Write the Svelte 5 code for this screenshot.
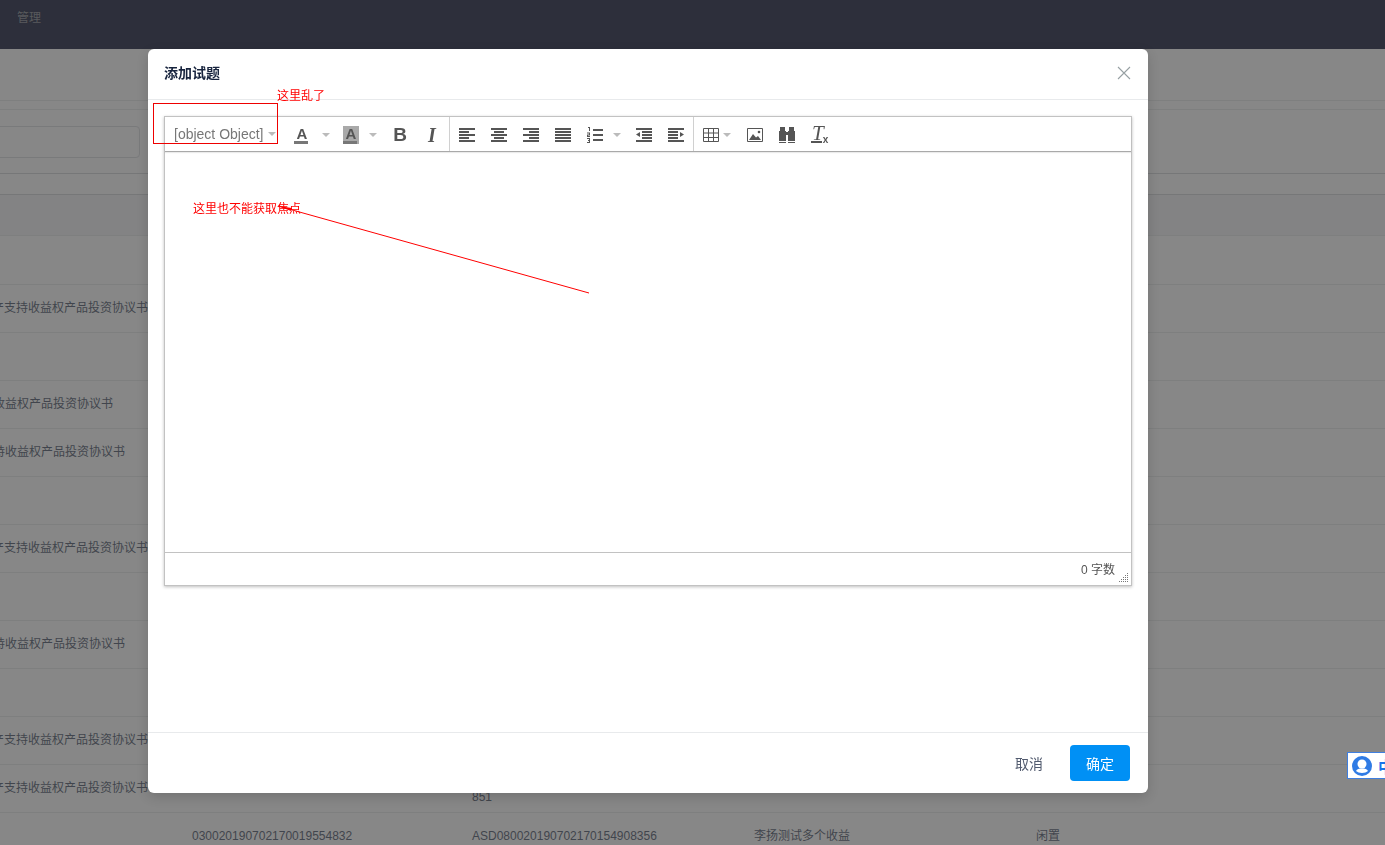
<script>
	const strips = [
		{ h: 52 },
		{ h: 9 },
		{ h: 64, input: true, dark: true },
		{ h: 21, dark: true },
		{ h: 41, head: true }
	];

	const long = '产支持收益权产品投资协议书';
	const rows = [
		{ h: 49 },
		{ name: long, end: 0 },
		{},
		{ name: '收益权产品投资协议书', end: 35 },
		{ name: '持收益权产品投资协议书', end: 23 },
		{},
		{ name: long, end: 0 },
		{},
		{ name: '持收益权产品投资协议书', end: 23 },
		{},
		{ name: long, end: 0 },
		{ name: long, end: 0, code: 'ASD080020190702170154908', code2: '851' },
		{ no: '030020190702170019554832', code: 'ASD080020190702170154908356', title: '李扬测试多个收益', state: '闲置' }
	];
</script>

<div class="page">
	<header class="topbar"><span class="menu">管理</span></header>

	{#each strips as s}
		<div class="strip" class:dark={s.dark} class:head={s.head} style="height: {s.h}px">
			{#if s.input}<div class="search"></div>{/if}
		</div>
	{/each}

	{#each rows as r}
		<div class="row" style="height: {r.h || 48}px">
			<div class="name" style="padding-right: {44 + (r.end || 0)}px">{r.name || ''}</div>
			<div>{r.no || ''}</div>
			<div>{r.code || ''}{#if r.code2}<br />{r.code2}{/if}</div>
			<div>{r.title || ''}</div>
			<div>{r.state || ''}</div>
		</div>
	{/each}
</div>

<div class="mask"></div>

<div class="modal">
	<div class="modal-head">
		<span class="modal-title">添加试题</span>
		<svg class="close" width="14" height="14" viewBox="0 0 14 14"><path d="M1 1l12 12M13 1L1 13" stroke="#97a0a3" stroke-width="1.100" fill="none" /></svg>
	</div>

	<div class="modal-body">
		<div class="editor">
			<div class="toolbar">
				<div class="group">
					<div class="select">[object Object]<i class="caret select-caret"></i></div>
					<div class="btn has-caret">
						<span class="glyph a">A<i class="underline"></i></span><i class="caret wide"></i>
					</div>
					<div class="btn has-caret">
						<span class="glyph a back">A<i class="underline"></i></span><i class="caret mid"></i>
					</div>
					<div class="btn"><span class="glyph b">B</span></div>
					<div class="btn"><span class="glyph it">I</span></div>
				</div>

				<div class="group">
					<div class="btn">
						<svg width="16" height="16" viewBox="0 0 16 16"><path d="M0 1h16v2H0zM0 4h10v2H0zM0 7h16v2H0zM0 10h10v2H0zM0 13h16v2H0z" fill="#555" /></svg>
					</div>
					<div class="btn">
						<svg width="16" height="16" viewBox="0 0 16 16"><path d="M0 1h16v2H0zM3 4h10v2H3zM0 7h16v2H0zM3 10h10v2H3zM0 13h16v2H0z" fill="#555" /></svg>
					</div>
					<div class="btn">
						<svg width="16" height="16" viewBox="0 0 16 16"><path d="M0 1h16v2H0zM6 4h10v2H6zM0 7h16v2H0zM6 10h10v2H6zM0 13h16v2H0z" fill="#555" /></svg>
					</div>
					<div class="btn">
						<svg width="16" height="16" viewBox="0 0 16 16"><path d="M0 1h16v2H0zM0 4h16v2H0zM0 7h16v2H0zM0 10h16v2H0zM0 13h16v2H0z" fill="#555" /></svg>
					</div>
					<div class="btn has-caret">
						<svg width="16" height="16" viewBox="0 0 16 16">
							<path d="M6 2h10v2H6zM6 7h10v2H6zM6 12h10v2H6z" fill="#555" />
							<path d="M1 0h2v4H2V1H1zM0 5.500h3v3H1v.5h2v1H0V7.500h2V6.500H0zM0 11h3v5H0v-1h2v-1H1v-1h1v-1H0z" fill="#555" />
						</svg>
						<i class="caret mid"></i>
					</div>
					<div class="btn">
						<svg width="16" height="16" viewBox="0 0 16 16"><path d="M0 1h16v2H0zM6 4h10v2H6zM6 7h10v2H6zM6 10h10v2H6zM0 13h16v2H0zM4 5v5L0 7.500z" fill="#555" /></svg>
					</div>
					<div class="btn">
						<svg width="16" height="16" viewBox="0 0 16 16"><path d="M0 1h16v2H0zM0 4h10v2H0zM0 7h10v2H0zM0 10h10v2H0zM0 13h16v2H0zM12 5v5l4-2.500z" fill="#555" /></svg>
					</div>
				</div>

				<div class="group last">
					<div class="btn">
						<svg width="16" height="14" viewBox="0 0 16 14"><path d="M.5.500h15v13H.5zM.5 5h15M.5 9.500h15M5.500.500v13M10.500.500v13" fill="none" stroke="#555" /></svg>
						<i class="caret near"></i>
					</div>
					<div class="btn">
						<svg width="16" height="14" viewBox="0 0 16 14">
							<path d="M.5.500h15v13H.5z" fill="#fff" stroke="#555" />
							<path d="M2 12l4-6 3 3.500 2-1.500 3 4z" fill="#555" />
							<circle cx="12" cy="4" r="1.300" fill="#555" />
						</svg>
					</div>
					<div class="btn">
						<svg width="16" height="16" viewBox="0 0 16 16"><path d="M1 0h5v4H1zM10 0h5v4h-5zM0 4h7v10H0zM7 5h2v3H7zM9 4h7v10H9zM0 15h7v1H0zM9 15h7v1H9z" fill="#555" /></svg>
					</div>
					<div class="btn clear">
						<span class="glyph it tx">T</span><span class="sub">x</span><i class="clear-line"></i>
					</div>
				</div>
			</div>

			<div class="content"></div>

			<div class="status">
				0 字数
				<svg class="grip" width="9" height="9" viewBox="0 0 9 9">
					<path d="M8 0h1v1H8zM8 2h1v1H8zM6 2h1v1H6zM8 4h1v1H8zM6 4h1v1H6zM4 4h1v1H4zM8 6h1v1H8zM6 6h1v1H6zM4 6h1v1H4zM2 6h1v1H2zM8 8h1v1H8zM6 8h1v1H6zM4 8h1v1H4zM2 8h1v1H2zM0 8h1v1H0z" fill="#777" />
				</svg>
			</div>
		</div>
	</div>

	<div class="modal-foot">
		<button class="text-btn">取消</button>
		<button class="primary">确定</button>
	</div>
</div>

<!-- red notes someone drew on top of the screenshot -->
<div class="note-box"></div>
<span class="note note-a">这里乱了</span>
<span class="note note-b">这里也不能获取焦点</span>
<svg class="note-line" width="320" height="100" viewBox="0 0 320 100">
	<path d="M0 0L311 87" stroke="#f00" fill="none" />
	<path d="M0 0l14 2-1 3z" fill="#f00" />
</svg>

<div class="widget">
	<span class="avatar">
		<svg width="20" height="20" viewBox="0 0 20 20">
			<circle cx="10" cy="10" r="10" fill="#2f7be5" />
			<circle cx="10" cy="8" r="4.500" fill="#fff" />
			<path d="M4 15c1-2 3-2.500 6-2.500s5 .5 6 2.500c-1.500 1.300-3.500 2-6 2s-4.500-.7-6-2z" fill="#fff" />
		</svg>
	</span>
	<span class="lang">中</span>
</div>

<style>
	:global(body) {
		overflow: hidden;
		background: #fff;
		font-family: "Liberation Sans", "Noto Sans CJK SC", sans-serif;
	}

	.page {
		height: 845px;
		overflow: hidden;
		font-size: 12px;
		color: #515a6e;
	}

	.topbar {
		height: 49px;
		background: #1e2541;
		padding-left: 17px;
		box-sizing: border-box;
		line-height: 37px;
	}

	.menu {
		color: #8a8d94;
	}

	.strip {
		box-sizing: border-box;
		border-bottom: 1px solid #e8eaec;
		display: flex;
		align-items: center;
	}

	.strip.dark {
		border-bottom-color: #d5d7da;
	}

	.strip.head {
		background: #f6f6f7;
	}

	.search {
		width: 150px;
		margin-left: -10px;
		height: 32px;
		box-sizing: border-box;
		border: 1px solid #dcdee2;
		border-radius: 4px;
	}

	.row {
		box-sizing: border-box;
		border-bottom: 1px solid #e8eaec;
		padding-bottom: 1px;
		display: grid;
		grid-template-columns: 192px 280px 282px 282px 1fr;
		align-items: center;
		line-height: 18px;
		white-space: nowrap;
	}

	.name {
		display: flex;
		justify-content: flex-end;
	}

	.mask {
		position: fixed;
		inset: 0;
		background: rgba(55, 55, 55, 0.6);
	}

	.modal {
		position: absolute;
		left: 148px;
		top: 49px;
		width: 1000px;
		height: 744px;
		background: #fff;
		border-radius: 6px;
		box-shadow: 0 4px 12px rgba(0, 0, 0, 0.15);
		display: flex;
		flex-direction: column;
	}

	.modal-head {
		height: 51px;
		box-sizing: border-box;
		border-bottom: 1px solid #e8eaec;
		padding: 0 17px 4px 16px;
		display: flex;
		align-items: center;
		justify-content: space-between;
	}

	.modal-title {
		font-size: 14px;
		font-weight: 700;
		color: #17233d;
	}

	.close {
		margin-top: 2px;
	}

	.modal-body {
		flex: 1;
		padding: 16px;
	}

	.editor {
		border: 1px solid #c2c2c2;
		box-shadow: 0 1px 3px rgba(0, 0, 0, 0.25);
	}

	.toolbar {
		height: 34px;
		border-bottom: 1px solid #a9a9a9;
		box-shadow: 0 1px 1px rgba(0, 0, 0, 0.08);
		display: flex;
		color: #555;
	}

	.group {
		display: flex;
		align-items: center;
		border-right: 1px solid #d0d0d0;
		padding: 0 1px;
	}

	.group:first-child {
		padding-left: 0;
	}

	.group.last {
		border-right: none;
	}

	.select {
		width: 121px;
		box-sizing: border-box;
		padding-left: 9px;
		font-size: 14px;
		color: #777;
		display: flex;
		align-items: center;
	}

	.btn {
		height: 100%;
		padding: 1px 8px 0;
		display: flex;
		align-items: center;
		position: relative;
		box-sizing: border-box;
	}

	.btn.has-caret {
		padding-right: 0;
	}

	.btn svg {
		display: block;
	}

	.caret {
		display: block;
		width: 0;
		height: 0;
		border-left: 4px solid transparent;
		border-right: 4px solid transparent;
		border-top: 4px solid #bbb;
	}

	.select-caret {
		margin-left: 4px;
	}

	.caret.wide {
		margin-left: 12px;
		margin-right: 5px;
	}

	.caret.mid {
		margin-left: 10px;
		margin-right: 7px;
	}

	.caret.near {
		margin-left: 4px;
	}

	.glyph {
		display: block;
		width: 16px;
		text-align: center;
		font-size: 16px;
		line-height: 16px;
		color: #555;
	}

	.glyph.a {
		position: relative;
		height: 18px;
		line-height: 15px;
		font-size: 15px;
		font-weight: 700;
	}

	.glyph.back {
		background: #a9a9a9;
	}

	.underline {
		position: absolute;
		left: 0;
		right: 2px;
		bottom: 0;
		height: 3px;
		background: #777;
	}

	.glyph.b {
		font-size: 19px;
		font-weight: 700;
	}

	.glyph.it {
		font-family: "Liberation Serif", serif;
		font-size: 20px;
		font-style: italic;
		font-weight: 700;
	}

	.clear {
		width: 32px;
		box-sizing: border-box;
	}

	.glyph.tx {
		width: auto;
		margin-left: 1px;
		margin-top: -3px;
		font-weight: 400;
		font-size: 21px;
	}

	.sub {
		font-size: 10px;
		font-weight: 700;
		line-height: 10px;
		margin-top: 10px;
		margin-left: -1px;
		color: #555;
	}

	.clear-line {
		position: absolute;
		left: 8px;
		top: 24px;
		width: 11px;
		height: 2px;
		background: #555;
	}

	.content {
		height: 400px;
	}

	.status {
		border-top: 1px solid #c2c2c2;
		position: relative;
		display: flex;
		align-items: center;
		justify-content: flex-end;
		padding-right: 16px;
		padding-bottom: 2px;
		box-sizing: border-box;
		height: 33px;
		font-size: 12px;
		color: #555;
	}

	.grip {
		position: absolute;
		right: 3px;
		bottom: 3px;
	}

	.modal-foot {
		height: 61px;
		box-sizing: border-box;
		border-top: 1px solid #e8eaec;
		padding: 0 18px 0 0;
		display: flex;
		align-items: center;
		justify-content: flex-end;
		gap: 10px;
	}

	button {
		width: 60px;
		height: 36px;
		border: none;
		border-radius: 4px;
		font: inherit;
		font-size: 14px;
		padding: 0;
	}

	.text-btn {
		background: none;
		color: #515a6e;
		padding-right: 2px;
	}

	.primary {
		background: #0090f5;
		color: #fff;
	}

	.note-box {
		position: absolute;
		left: 153px;
		top: 103px;
		width: 125px;
		height: 41px;
		box-sizing: border-box;
		border: 1px solid #e00;
	}

	.note {
		position: absolute;
		font-size: 12px;
		line-height: 14px;
		color: #f00;
	}

	.note-a {
		left: 277px;
		top: 89px;
	}

	.note-b {
		left: 193px;
		top: 202px;
	}

	.note-line {
		position: absolute;
		left: 278px;
		top: 206px;
	}

	.widget {
		position: fixed;
		left: 1347px;
		top: 752px;
		width: 38px;
		height: 27px;
		box-sizing: border-box;
		background: #fff;
		border: 1px solid #3f7fe0;
		border-right: none;
		display: flex;
		align-items: center;
		padding-left: 4px;
		gap: 6px;
		overflow: hidden;
	}

	.avatar {
		display: block;
		height: 20px;
	}

	.lang {
		color: #1a73e8;
		font-size: 16px;
		font-weight: 700;
		white-space: nowrap;
	}
</style>
